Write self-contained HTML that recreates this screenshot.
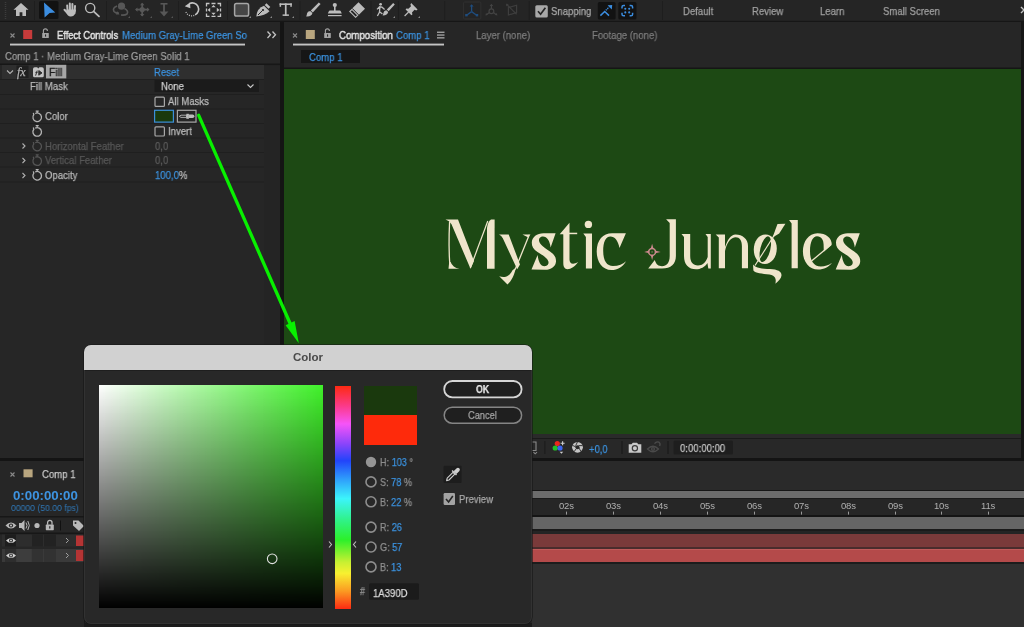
<!DOCTYPE html>
<html><head><meta charset="utf-8">
<style>
*{margin:0;padding:0;box-sizing:border-box}
html,body{width:1024px;height:627px;overflow:hidden;background:#141414;font-family:"Liberation Sans",sans-serif;color:#b8b8b8;position:relative}
.a{position:absolute;will-change:transform}
.t{position:absolute;white-space:nowrap;font-size:11px;line-height:12px;transform-origin:0 0;transform:scaleX(.87);-webkit-text-stroke-width:.25px;will-change:transform}
.b{color:#3b92df}
svg{overflow:visible}

</style></head><body>
<svg class="a" style="left:0;top:0" width="1024" height="22" viewBox="0 0 1024 22">
 <rect x="0" y="0" width="1024" height="21" fill="#252525"/>
 <rect x="0" y="20.8" width="1024" height="1.7" fill="#161616"/>
 <line x1="5.5" y1="2" x2="5.5" y2="19" stroke="#3c3c3c" stroke-width="1.5" stroke-dasharray="1 1"/>
 <!-- home -->
 <path d="M21 3 L13.5 9.8 L16 9.8 L16 16 L19.6 16 L19.6 12.2 L22.4 12.2 L22.4 16 L26 16 L26 9.8 L28.5 9.8 Z" fill="#bcbcbc"/>
 <line x1="34.5" y1="1" x2="34.5" y2="20" stroke="#1e1e1e"/>
 <!-- select -->
 <rect x="39" y="1" width="19.5" height="18" rx="1.5" fill="#121212"/>
 <path d="M44 2.6 L55.3 12.4 L49.6 13 L44.6 17.6 Z" fill="#3b8de0"/>
 <!-- hand -->
 <g fill="#bcbcbc" stroke="#bcbcbc" stroke-linecap="round">
  <line x1="67.2" y1="5.5" x2="67.6" y2="11" stroke-width="2"/>
  <line x1="69.8" y1="3.6" x2="70" y2="10.5" stroke-width="2"/>
  <line x1="72.4" y1="4" x2="72.4" y2="10.5" stroke-width="2"/>
  <line x1="75" y1="6" x2="74.6" y2="11" stroke-width="2"/>
  <line x1="64.5" y1="9.8" x2="67.5" y2="13" stroke-width="2"/>
  <path d="M66.5 9.5 L76 9.5 L75.5 13.5 Q73.5 16.8 70.5 16.5 Q67.5 16.2 66.5 13 Z" stroke="none"/>
 </g>
 <!-- magnifier -->
 <circle cx="90.2" cy="8" r="4.6" fill="none" stroke="#bcbcbc" stroke-width="1.4"/>
 <line x1="93.6" y1="11.4" x2="99" y2="16.4" stroke="#bcbcbc" stroke-width="1.8" stroke-linecap="round"/>
 <line x1="106.5" y1="1" x2="106.5" y2="20" stroke="#1e1e1e"/>
 <!-- orbit (dim) -->
 <g fill="#575757" stroke="#575757">
  <circle cx="121.5" cy="6.2" r="3.6" stroke="none"/>
  <path d="M117 6 Q112 8 114 11.5 Q116 13.5 119 13 M124.5 8.5 Q129 11 127 14 Q125 15.5 121 15" fill="none" stroke-width="1.6"/>
  <path d="M117 11 L119.5 14.5 L116 14.5 Z" stroke="none"/>
 </g>
 <path d="M128 18 L130 16 L130 18 Z" fill="#555"/>
 <!-- pan -->
 <g stroke="#575757" stroke-width="1.8" fill="#575757">
  <line x1="136" y1="9.6" x2="148.5" y2="9.6"/>
  <line x1="142.2" y1="3.5" x2="142.2" y2="16"/>
  <circle cx="142.2" cy="9.6" r="2.6" stroke="none"/>
  <path d="M135 9.6 L137.5 7.5 L137.5 11.7 Z M149.5 9.6 L147 7.5 L147 11.7 Z M142.2 2.8 L140 5.2 L144.4 5.2 Z M142.2 16.6 L140 14 L144.4 14 Z" stroke="none"/>
 </g>
 <path d="M150 18 L152 16 L152 18 Z" fill="#555"/>
 <!-- dolly -->
 <g fill="#575757">
  <rect x="160.5" y="3" width="7" height="1.6"/>
  <rect x="163.1" y="3" width="1.8" height="10"/>
  <path d="M159.6 11.5 L168.4 11.5 L164 16.6 Z"/>
 </g>
 <path d="M171 18 L173 16 L173 18 Z" fill="#555"/>
 <line x1="178.5" y1="1" x2="178.5" y2="20" stroke="#1e1e1e"/>
  <!-- rotate -->
 <path d="M189.5 3.6 A6.2 6.2 0 1 1 195.1 14.9" fill="none" stroke="#c4c4c4" stroke-width="1.6"/>
 <path d="M194.2 15.3 A6.2 6.2 0 0 1 185.6 10.8" fill="none" stroke="#c4c4c4" stroke-width="1.3" stroke-dasharray="1 1.2"/>
 <path d="M184.8 6.2 L190 2.4 L190.4 8.2 Z" fill="#c4c4c4"/>
<!-- anchor / pan behind -->
 <g stroke="#c4c4c4" stroke-width="1.3" fill="none">
  <path d="M206.5 6.5 V3.5 H209.5 M211.5 3.5 H215.5 M217.5 3.5 H220.5 V6.5 M220.5 8.5 V11.5 M220.5 13.5 V16.3 H217.5 M215.5 16.3 H211.5 M209.5 16.3 H206.5 V13.5 M206.5 11.5 V8.5"/>
 </g>
 <g fill="#c4c4c4">
  <path d="M213.5 4.9 L211.3 7.2 L215.7 7.2 Z M213.5 15 L211.3 12.7 L215.7 12.7 Z M207.6 9.9 L210.2 7.7 L210.2 12.1 Z M219.4 9.9 L216.8 7.7 L216.8 12.1 Z"/>
 </g>
 <line x1="227.5" y1="1" x2="227.5" y2="20" stroke="#1e1e1e"/>
 <!-- rect -->
 <rect x="234.6" y="3.6" width="14" height="12.4" rx="1.8" fill="#464646" stroke="#a6a6a6" stroke-width="1.5"/>
 <path d="M249 18 L251 16 L251 18 Z" fill="#888"/>
 <!-- pen -->
 <g fill="#bcbcbc">
  <path d="M266.5 3.2 L270.3 7 L268.5 8.8 L264.7 5 Z"/>
  <path d="M264 5.8 L269.5 11.3 Q265 15.5 256.3 16.4 Q257.2 8 264 5.8 Z"/>
 </g>
 <path d="M258 15 L262.5 10.5" stroke="#252525" stroke-width="1"/>
 <circle cx="263" cy="10" r="1.1" fill="#252525"/>
 <path d="M270 18 L272 16 L272 18 Z" fill="#888"/>
 <!-- T -->
 <g fill="#bcbcbc">
  <rect x="279.6" y="3.4" width="12.2" height="1.6"/>
  <rect x="279.6" y="3.4" width="1.5" height="3.4"/>
  <rect x="290.3" y="3.4" width="1.5" height="3.4"/>
  <rect x="284.9" y="3.4" width="1.7" height="12.4"/>
  <rect x="282.6" y="14.4" width="6.3" height="1.5"/>
 </g>
 <path d="M292 18 L294 16 L294 18 Z" fill="#888"/>
 <line x1="300" y1="1" x2="300" y2="20" stroke="#1e1e1e"/>
 <!-- brush -->
 <g fill="#bcbcbc">
  <path d="M318.8 2.4 L320.6 4 L312.8 12.4 L310.8 10.6 Z"/>
  <path d="M310.2 11 L312.4 13 Q311.8 16.8 306.2 16.4 Q307 14.8 307 13.6 Q307.4 11.4 310.2 11 Z"/>
 </g>
 <!-- stamp -->
 <g fill="#bcbcbc">
  <circle cx="334.8" cy="5" r="2.1"/>
  <rect x="334" y="6" width="1.6" height="5"/>
  <path d="M329 11 Q329 10.4 330 10.4 L339.6 10.4 Q340.6 10.4 340.6 11 L341.8 13.6 L327.8 13.6 Z"/>
  <rect x="328" y="15" width="13.6" height="1.2"/>
 </g>
 <!-- eraser -->
 <g>
  <path d="M358.5 2.2 L365 8.7 L355.6 18 L349 11.6 Z" fill="#bcbcbc"/>
  <path d="M352.2 8.4 L358.6 14.9" stroke="#252525" stroke-width="1"/>
  <path d="M350.6 11.6 L355.6 16.6 L357 15.2 L352 10.2 Z" fill="#252525"/>
 </g>
 <line x1="371" y1="1" x2="371" y2="20" stroke="#1e1e1e"/>
 <!-- roto brush -->
 <g fill="#bcbcbc" stroke="#bcbcbc">
  <circle cx="380.6" cy="4.3" r="1.4" stroke="none"/>
  <path d="M377 9.4 L379.6 6.8 L382 7.2 L384.6 9.4 M380 7 L379.4 12.2 L377.4 16 M379.6 11.8 L382.4 14" fill="none" stroke-width="1.3"/>
  <path d="M393.2 3 L394.8 4.6 L388.6 11.2 L386.8 9.6 Z" stroke="none"/>
  <path d="M386.2 10.2 L388.2 12 Q387.4 15.6 382.6 15.4 Q383.6 13.4 383.6 12.6 Q384 10.6 386.2 10.2 Z" stroke="none"/>
 </g>
 <path d="M393 18 L395 16 L395 18 Z" fill="#888"/>
 <line x1="398.4" y1="1" x2="398.4" y2="20" stroke="#1e1e1e"/>
 <!-- pin -->
 <g fill="#bcbcbc">
  <path d="M411.2 3 L417.6 9.4 L416.2 10.4 L414.6 9.8 L412 12.4 L412.4 14.4 L411.4 15.2 L405.6 9.4 L406.4 8.4 L408.4 8.8 L411 6.2 L410.4 4.6 Z"/>
  <path d="M408.2 11.6 L409 12.4 L405 16.4 L404.2 15.6 Z"/>
 </g>
 <path d="M418 18 L420 16 L420 18 Z" fill="#888"/>
 <line x1="444.7" y1="1" x2="444.7" y2="20" stroke="#1e1e1e"/>
  <!-- axis local -->
 <rect x="463.6" y="2" width="17.2" height="17" rx="1" fill="#242424" stroke="#303030" stroke-width="1"/>
 <g stroke="#1f4d7e" stroke-width="1.3" fill="none">
  <line x1="471.6" y1="5.5" x2="471.6" y2="11.6"/>
  <line x1="471.6" y1="11.6" x2="466.6" y2="15.2"/>
  <line x1="471.6" y1="11.6" x2="476.6" y2="15.2"/>
 </g>
 <g fill="#1f4d7e"><path d="M471.6 4.2 L469.6 6.4 L473.6 6.4 Z"/><rect x="465.2" y="14" width="2.4" height="2.4"/><rect x="475.8" y="14" width="2.4" height="2.4"/></g>
 <!-- world -->
 <g stroke="#434343" stroke-width="1.2" fill="none">
  <line x1="491.4" y1="5" x2="491.4" y2="9"/>
  <circle cx="491.4" cy="11.2" r="2.4"/>
  <line x1="489.4" y1="12.6" x2="486.4" y2="14.8"/>
  <line x1="493.4" y1="12.6" x2="496.4" y2="14.8"/>
 </g>
 <g fill="#434343"><path d="M491.4 3.8 L489.6 6 L493.2 6 Z M485.4 15.6 L486 13 L487.8 15 Z M497.4 15.6 L495 15 L496.8 13 Z"/></g>
 <!-- view -->
 <g stroke="#3e3e3e" stroke-width="1.2" fill="none">
  <path d="M508.4 7.6 L516.6 5.2 L516.6 12.6 L508.4 15 Z"/>
  <line x1="507" y1="4.8" x2="516.6" y2="14.2"/>
 </g>
 <path d="M506 3.8 L508.8 4 L506.2 6.6 Z" fill="#3e3e3e"/>
<line x1="529.2" y1="1" x2="529.2" y2="20" stroke="#1e1e1e"/>
 <!-- snapping checkbox -->
 <rect x="535.3" y="5.2" width="12.5" height="12.4" rx="1.5" fill="#a9a9a9"/>
 <path d="M538 11.3 L540.6 14.2 L545.4 7.8" fill="none" stroke="#262626" stroke-width="1.7"/>
 <rect x="597.8" y="2" width="17.8" height="17.4" rx="1.5" fill="#121212"/>
 <path d="M600.4 15.6 L604.7 11.5 L609 15.6" fill="none" stroke="#3b8de0" stroke-width="1.5"/>
 <path d="M605.8 10.2 L609 7.4" fill="none" stroke="#3b8de0" stroke-width="1.4" stroke-dasharray="1.2 .8"/>
 <path d="M607.6 5.2 L612.2 5 L611.8 9.4 Z" fill="#3b8de0"/>
 <rect x="618.3" y="2" width="18.2" height="17.4" rx="1.5" fill="#121212"/>
 <g stroke="#3b8de0" stroke-width="1.5" fill="none">
  <path d="M622 8.4 V7 Q622 5.4 623.6 5.4 H625 M629.6 5.4 H631 Q632.6 5.4 632.6 7 V8.4 M632.6 12.8 V14.2 Q632.6 15.8 631 15.8 H629.6 M625 15.8 H623.6 Q622 15.8 622 14.2 V12.8"/>
 </g>
 <g fill="#3b8de0"><circle cx="625.3" cy="8.7" r="1.05"/><circle cx="629.2" cy="8.7" r="1.05"/><circle cx="625.3" cy="12.4" r="1.05"/><circle cx="629.2" cy="12.4" r="1.05"/></g>
 <line x1="662.5" y1="1" x2="662.5" y2="20" stroke="#1e1e1e"/>
 <path d="M1021 7 L1024 10 L1021 13" fill="none" stroke="#c4c4c4" stroke-width="1.4"/>
</svg>

<!-- toolbar text -->
<div class="t" style="left:551px;top:5px;color:#a9a9a9">Snapping</div>
<div class="t" style="left:683px;top:5px;color:#a0a0a0">Default</div>
<div class="t" style="left:752px;top:5px;color:#a0a0a0">Review</div>
<div class="t" style="left:820px;top:5px;color:#a0a0a0">Learn</div>
<div class="t" style="left:883px;top:5px;color:#a0a0a0">Small Screen</div>

<!-- LEFT PANEL -->
<div class="a" style="left:0;top:22px;width:280px;height:436px;background:#262626"></div>
<div class="a" style="left:264px;top:65px;width:16px;height:393px;background:#242424"></div>
<svg class="a" style="left:0;top:22px" width="280" height="170">
 <path d="M10.5 11.5 L14.5 15.5 M14.5 11.5 L10.5 15.5" stroke="#8a8a8a" stroke-width="1.1"/>
 <rect x="23.2" y="8" width="9" height="9" fill="#c73b3b"/>
 <g fill="#a4a4a4"><rect x="42.2" y="11" width="6.6" height="5" rx=".5"/><path d="M43.4 11.1 V8.9 A2 2 0 0 1 47.4 8.9" fill="none" stroke="#a4a4a4" stroke-width="1.1"/></g>
 <rect x="45" y="12.4" width="1.1" height="2.2" fill="#262626"/>
 <rect x="10" y="21.6" width="235" height="1.9" fill="#c4c4c4"/>
 <path d="M267.5 9.5 L270.5 12.8 L267.5 16 M272.5 9.5 L275.5 12.8 L272.5 16" fill="none" stroke="#c4c4c4" stroke-width="1.3"/>
 <rect x="0" y="41.5" width="280" height="1.6" fill="#171717"/>
</svg>
<div class="t" style="left:57px;top:29px;color:#e4e4e4;transform:scaleX(.85);-webkit-text-stroke-width:.45px">Effect Controls</div>
<div class="t b" style="left:121.5px;top:29px">Medium Gray-Lime Green So</div>
<div class="t" style="left:5px;top:50px;color:#9c9c9c">Comp 1 · Medium Gray-Lime Green Solid 1</div>

<!-- effect rows -->
<div class="a" style="left:0;top:65px;width:264px;height:393px;background:#262626"></div>
<div class="a" style="left:2px;top:65px;width:262px;height:14px;background:#2f2f2f"></div>
<svg class="a" style="left:0;top:60px" width="280" height="140">
 <g fill="#1f1f1f">
  <rect x="0" y="19" width="264" height="1"/>
  <rect x="0" y="34" width="264" height="1"/>
  <rect x="0" y="48.5" width="264" height="1"/>
  <rect x="0" y="63" width="264" height="1"/>
  <rect x="0" y="77.5" width="264" height="1"/>
  <rect x="0" y="92" width="264" height="1"/>
  <rect x="0" y="106.5" width="264" height="1"/>
  <rect x="0" y="121.5" width="264" height="1"/>
 </g>
 <path d="M7 10.5 L10 13.5 L13 10.5" fill="none" stroke="#b0b0b0" stroke-width="1.1"/>
 <rect x="16.5" y="5.5" width="12" height="12.5" fill="#1f1f1f"/>
 <rect x="46" y="4.8" width="20.3" height="13.6" fill="#a6a6a6"/>
 <g fill="#c4c4c4"><path d="M33 9 Q33 7.2 34.8 7.2 L37.2 7.2 L38.2 8.4 L39.4 7.2 L42 7.2 Q43.8 7.2 43.8 9 L43.8 15.8 Q43.8 17.3 42.3 17.3 L34.5 17.3 Q33 17.3 33 15.8 Z"/></g>
 <path d="M35.6 15.6 L37.2 10.6 M35.4 12.4 H37.6 M38.8 10.6 L42 12.9 L38.8 15.2 Z" fill="#2f2f2f" stroke="#2f2f2f" stroke-width="1"/>
 <!-- dropdown -->
 <rect x="154.5" y="20" width="104.5" height="12" fill="#1b1b1b"/>
 <path d="M247.5 24.5 L250.5 27.5 L253.5 24.5" fill="none" stroke="#c8c8c8" stroke-width="1.1"/>
 <!-- checkbox all masks -->
 <rect x="155" y="37.2" width="9.4" height="9.2" rx="1" fill="none" stroke="#a8a8a8" stroke-width="1.2"/>
 <!-- color swatch -->
 <rect x="154.6" y="50.3" width="18.8" height="11.8" fill="#1a390d" stroke="#3b8fd9" stroke-width="1.2"/>
 <rect x="177.4" y="50.3" width="18.6" height="11.8" fill="none" stroke="#a8a8a8" stroke-width="1.2"/>
 <path d="M179.2 56.3 L181 55.2 H186.5 V57.4 H181 Z" fill="none" stroke="#b8b8b8" stroke-width=".9"/>
 <rect x="186.3" y="53.8" width="2.6" height="5" fill="#bcbcbc"/>
 <path d="M188.8 54.6 H192.6 Q194.4 54.6 194.4 56.3 Q194.4 58 192.6 58 H188.8 Z" fill="#bcbcbc"/>
 <!-- checkbox invert -->
 <rect x="155" y="66.8" width="9.4" height="9.2" rx="1" fill="none" stroke="#a8a8a8" stroke-width="1.2"/>
 <!-- stopwatches -->
 <path d="M35.18 53.50 A4.3 4.3 0 1 1 33.81 54.65 L33.30 52.90" fill="none" stroke="#b4b4b4" stroke-width="1.3"/><path d="M35.7 51.10 H38.7 M37.2 51.10 V53.00" fill="none" stroke="#b4b4b4" stroke-width="1.2"/>
 <path d="M35.18 68.10 A4.3 4.3 0 1 1 33.81 69.25 L33.30 67.50" fill="none" stroke="#b4b4b4" stroke-width="1.3"/><path d="M35.7 65.70 H38.7 M37.2 65.70 V67.60" fill="none" stroke="#b4b4b4" stroke-width="1.2"/>
 <path d="M35.18 82.70 A4.3 4.3 0 1 1 33.81 83.85 L33.30 82.10" fill="none" stroke="#555" stroke-width="1.3"/><path d="M35.7 80.30 H38.7 M37.2 80.30 V82.20" fill="none" stroke="#555" stroke-width="1.2"/>
 <path d="M35.18 97.30 A4.3 4.3 0 1 1 33.81 98.45 L33.30 96.70" fill="none" stroke="#555" stroke-width="1.3"/><path d="M35.7 94.90 H38.7 M37.2 94.90 V96.80" fill="none" stroke="#555" stroke-width="1.2"/>
 <path d="M35.18 112.00 A4.3 4.3 0 1 1 33.81 113.15 L33.30 111.40" fill="none" stroke="#b4b4b4" stroke-width="1.3"/><path d="M35.7 109.60 H38.7 M37.2 109.60 V111.50" fill="none" stroke="#b4b4b4" stroke-width="1.2"/>
 <g fill="none" stroke="#b0b0b0" stroke-width="1.1">
  <path d="M22.5 83.5 L25 86 L22.5 88.5"/>
  <path d="M22.5 98 L25 100.5 L22.5 103"/>
  <path d="M22.5 113 L25 115.5 L22.5 118"/>
 </g>
</svg>
<div class="t" style="left:17px;top:65.5px;color:#b4b4b4;font-family:'Liberation Serif';font-style:italic;font-size:12px;transform:none">fx</div>
<div class="t" style="left:49px;top:65.5px;color:#1e1e1e;transform:scaleX(.95);-webkit-text-stroke-width:.35px">Fill</div>
<div class="t b" style="left:153.5px;top:65.5px">Reset</div>
<div class="t" style="left:30px;top:80px;color:#b8b8b8">Fill Mask</div>
<div class="t" style="left:160.5px;top:80px;color:#cfcfcf">None</div>
<div class="t" style="left:168px;top:95px;color:#bcbcbc">All Masks</div>
<div class="t" style="left:45px;top:110px;color:#b8b8b8">Color</div>
<div class="t" style="left:168px;top:124.5px;color:#bcbcbc">Invert</div>
<div class="t" style="left:45px;top:139.5px;color:#575757">Horizontal Feather</div>
<div class="t" style="left:155px;top:139.5px;color:#5c5c5c">0,0</div>
<div class="t" style="left:45px;top:154px;color:#575757">Vertical Feather</div>
<div class="t" style="left:155px;top:154px;color:#5c5c5c">0,0</div>
<div class="t" style="left:45px;top:168.5px;color:#b8b8b8">Opacity</div>
<div class="t" style="left:155px;top:168.5px;color:#b8b8b8"><span class="b">100,0</span>%</div>

<!-- COMP PANEL -->
<div class="a" style="left:284px;top:22px;width:737px;height:436px;background:#262626"></div>
<div class="a" style="left:1021px;top:22px;width:3px;height:436px;background:#161616"></div>
<svg class="a" style="left:284px;top:22px" width="740" height="50">
 <path d="M9 11.5 L13 15.5 M13 11.5 L9 15.5" stroke="#8a8a8a" stroke-width="1.1"/>
 <rect x="21.8" y="8" width="9" height="9" fill="#b9a67f"/>
 <g fill="#a4a4a4"><rect x="40.2" y="11" width="6.6" height="5" rx=".5"/><path d="M41.4 11.1 V8.9 A2 2 0 0 1 45.4 8.9" fill="none" stroke="#a4a4a4" stroke-width="1.1"/></g>
 <rect x="43" y="12.4" width="1.1" height="2.2" fill="#262626"/>
 <g fill="#a8a8a8"><rect x="153" y="9.6" width="7.5" height="1.3"/><rect x="153" y="12.4" width="7.5" height="1.3"/><rect x="153" y="15.2" width="7.5" height="1.3"/></g>
 <rect x="9" y="21.6" width="151" height="1.9" fill="#c4c4c4"/>
 <rect x="17" y="28" width="59" height="13" fill="#161616"/>
 <rect x="0" y="45.5" width="740" height="1.5" fill="#151515"/>
</svg>
<div class="t" style="left:339px;top:29px;color:#e4e4e4;transform:scaleX(.88);-webkit-text-stroke-width:.45px">Composition</div>
<div class="t b" style="left:396px;top:29px">Comp 1</div>
<div class="t" style="left:476px;top:29px;color:#7c7c7c">Layer (none)</div>
<div class="t" style="left:592px;top:29px;color:#7c7c7c">Footage (none)</div>
<div class="t b" style="left:309px;top:50.5px">Comp 1</div>

<!-- viewer -->
<div class="a" style="left:284px;top:69px;width:737px;height:365.3px;background:#1d4914"></div>
<div class="a" style="left:284px;top:434.3px;width:737px;height:3.5px;background:#2a2a2a"></div>
<div class="a" style="left:284px;top:437.8px;width:737px;height:1.2px;background:#1a1a1a"></div>
<div class="a" style="left:284px;top:439px;width:737px;height:19px;background:#282828"></div>

<!-- title text -->
<svg class="a" style="left:0;top:0" width="1024" height="627" viewBox="0 0 1024 627">
<g fill="#efe5cb">
 <!-- M -->
 <path d="M445.5 219.5 L458 219.5 L474 261 L470.5 268.8 L451.5 224.2 Q449.5 220.8 445.5 219.5 Z"/>
 <path d="M449.6 221.5 C448.8 238, 448.8 252, 449.9 266" fill="none" stroke="#efe5cb" stroke-width="1.3"/>
 <path d="M448.5 268.8 L459.5 268.8 Q452.5 267.5 450.6 262 L449.2 262 Z"/>
 <path d="M470.3 268 L487.8 221" fill="none" stroke="#efe5cb" stroke-width="1.2"/>
 <path d="M487 268.8 L487 228 Q487.8 221.5 491 219.5 L494.6 219.5 L494.6 268.8 Z"/>
 <!-- y -->
 <path d="M499 234.4 L508.7 234.4 L520 264.5 L517.2 269.2 L502.8 238.2 Q501.5 235.4 499 234.4 Z"/>
 <path d="M522.5 234.4 L530.6 234.4 Q528.8 235.2 528.3 237.5 Z"/>
 <path d="M529.3 234.8 L515.2 269.5" fill="none" stroke="#efe5cb" stroke-width="1.3"/>
 <path d="M515.9 267.5 C514.5 275, 511.5 281, 507.5 284.5 L499.2 276.2 C504 278, 509 277.2, 512.3 270.5 Z"/>
 <!-- s -->
 <path id="gs" d="M555.6 233.2 L550.6 247.5 C549.8 241, 547 236.6, 543 236.6 C539.8 236.6, 538.5 239, 539.2 241.5 C540.2 245, 545 248, 550 251.5 C554.5 254.5, 556.2 257.5, 556 261.5 C555.8 266.5, 551 269.8, 545 269.8 L531.5 269.6 L537.6 255 C538.5 262, 540.5 266.2, 544.5 266.2 C547.5 266.2, 549 264, 548.4 261.5 C547.5 258, 543 255.5, 537.5 252 C533.5 249.5, 531.6 246.5, 531.8 242.5 C532 237, 537 233.2, 543.5 233.2 Z"/>
 <!-- t -->
 <path d="M569.5 222.8 L569.5 259.5 C569.5 263.5, 572.5 265.2, 578.2 262 C575 266.5, 571 269.2, 567.5 269.2 C564.8 269.2, 563.3 267, 563.3 263 L563.3 234.3 L559.7 234.3 Z"/>
 <rect x="563" y="232.7" width="14.2" height="1.5"/>
 <!-- i -->
 <circle cx="588.4" cy="224.4" r="3.7"/>
 <path d="M583.3 233.5 L592 233.5 L592 268.4 L585.9 268.4 L585.9 237 Z"/>
 <!-- c -->
 <path d="M625.9 233.2 L619.5 248 C618 240, 614.5 236.4, 610.5 236.4 C605.5 236.4, 603.2 242, 603.2 251 C603.2 261, 607 266, 613 266 C618.5 266, 623 264, 626 261.2 C623 267, 617.5 270, 611.5 270 C602.5 270, 596.7 262, 596.7 251.5 C596.7 240, 603 233.2, 612 233.2 Z"/>
 <!-- J -->
 <path d="M666.1 219.2 L675.9 219.2 L675.9 256 C675.9 264, 671 268.5, 662 268.5 L648.2 268.5 L654.8 260 C656 264.5, 658.5 266.2, 662 266.2 C666.5 266.2, 669.7 263, 669.7 256 L669.7 223 Z"/>
 <!-- u -->
 <path d="M681.5 234 L690.2 234 L690.2 256 C690.2 262, 693 265.5, 698 265.5 C702.5 265.5, 706 262, 707.7 257 L707.7 237 L705.5 234 L710.8 234 L710.8 268.5 L708.3 268.5 L707.4 263 C705 267, 700.5 269.3, 696 269.3 C688.5 269.3, 684 264.5, 684 256 L684 237 Z"/>
 <!-- n -->
 <path d="M715.7 234.4 L725 234.4 L725 247 C727.5 239.5, 731 234.4, 735.5 234.4 C742.5 234.4, 748 239, 748 246 L748 268.2 L741.9 268.2 L741.9 246 C741.9 240.5, 739.5 237.2, 735.8 237.2 C731 237.2, 727 242, 725 251 L725 268.2 L718.8 268.2 L718.8 237.5 Z"/>
 <!-- g -->
 <path d="M765.5 234.4 C772.5 234.4, 776.8 241, 776.8 248.5 C776.8 257, 771.5 264, 764.8 264 C758 264, 753.8 257.5, 753.8 249.5 C753.8 241.2, 758.5 234.4, 765.5 234.4 Z"/>
 <ellipse cx="765.3" cy="249.2" rx="5" ry="13.2" transform="rotate(14 765.3 249.2)" fill="#1d4914"/>
 <path d="M755 265.5 L780.5 225.5" fill="none" stroke="#efe5cb" stroke-width="1.2"/>
 <path d="M777.5 224 L785.4 223.8 L779.2 233.5 L772.5 237.5 Z"/>
 <path d="M753 264.5 C756 268.2, 762 268.8, 770 269 C777.5 269.3, 781.8 271.5, 781.5 275.5 C781.2 278.5, 778.5 281, 775.4 283.8 C776.5 279.5, 775.5 275.5, 769.5 274.6 C762 273.6, 755.5 273.2, 753.4 270.5 Z"/>
 <!-- l -->
 <path d="M789.1 220.1 L797.8 220.1 L797.8 268.2 L791.6 268.2 L791.6 223.5 Z"/>
 <!-- e -->
 <path d="M831.8 244.5 C831.8 238, 826 233.2, 817.5 233.2 C808.5 233.2, 802.9 241.5, 802.9 251.5 C802.9 262, 809.5 269.6, 818 269.6 C824 269.6, 829 267, 832 262.8 C828.5 265.5, 825 266.5, 821 266.5 C813.5 266.5, 810 260.5, 810 251 C810 241.5, 813 236.2, 817 236.2 C821.5 236.2, 823.5 240, 823.6 244.5 L823.8 251.8 Z"/>
 <path d="M831 244.8 L811.5 261" fill="none" stroke="#efe5cb" stroke-width="1.3"/>
 <!-- s2 -->
 <use href="#gs" transform="translate(304.2 0)"/>
</g>
</svg>

<svg class="a" style="left:640px;top:240px" width="24" height="24">
 <g fill="#cc8a8e">
  <path d="M12.1 3.8 L13.5 8.8 L10.7 8.8 Z M12.1 20 L13.5 15 L10.7 15 Z M4.2 11.9 L9.2 10.5 L9.2 13.3 Z M20.7 11.9 L15 10.5 L15 13.3 Z"/>
 </g>
 <circle cx="12.1" cy="11.9" r="3.4" fill="none" stroke="#cc8a8e" stroke-width="1.6"/>
 <circle cx="12.1" cy="11.9" r=".9" fill="#6a6a50"/>
</svg>

<!-- comp footer icons -->
<svg class="a" style="left:520px;top:435px" width="504" height="24">
 <path d="M11.5 7 H16 V15.5 H11.5 M13.5 17.2 L15.2 18.8 L17 17.2" fill="none" stroke="#8a8a8a" stroke-width="1.1"/>
 <rect x="24.3" y="6" width="1.2" height="13" fill="#1c1c1c"/>
 <circle cx="37.3" cy="8.6" r="2.6" fill="#e8281e"/>
 <circle cx="35.2" cy="13" r="2.6" fill="#22c028"/>
 <circle cx="40" cy="13" r="2.6" fill="#3a64f0"/>
 <path d="M40.6 8.2 H44.6 M42.6 6.2 V10.2" stroke="#cfcfcf" stroke-width="1.1"/>
 <path d="M39.6 16.8 L43.2 16.8 L41.4 18.8 Z" fill="#cfcfcf"/>
 <circle cx="57.5" cy="12.3" r="5.4" fill="#c4c4c4"/>
 <circle cx="57.5" cy="12.3" r="2" fill="#282828"/>
 <g stroke="#282828" stroke-width=".9"><path d="M57.5 6.9 L55.6 10.8 M62.6 10.6 L58.6 10.6 M61 16.5 L58.9 12.9 M54.2 16.6 L56.3 13.6 M52.2 10.2 L56 12"/></g>
 <rect x="101.4" y="6" width="1.2" height="13" fill="#1c1c1c"/>
 <path d="M108.7 9.3 H111.5 L112.8 7.8 H117 L118.3 9.3 H121.3 V17.7 H108.7 Z" fill="#c8c8c8"/>
 <circle cx="114.9" cy="13.2" r="2.6" fill="none" stroke="#3a3a3a" stroke-width="1.2"/>
 <g fill="none" stroke="#4a4a4a" stroke-width="1.3"><path d="M127.5 14 Q133 8.5 138.5 14 Q133 19.5 127.5 14 Z"/><circle cx="133" cy="14" r="1.4"/><path d="M134.5 8.6 Q136.5 6 139 7.2 Q140.8 8.6 139.6 11"/></g>
 <rect x="147.4" y="6" width="1.2" height="13" fill="#1c1c1c"/>
 <rect x="153.5" y="5.6" width="59.5" height="14" rx="1.5" fill="#1e1e1e"/>
</svg>
<div class="t b" style="left:589px;top:442.5px;transform:scaleX(.86)">+0,0</div>
<div class="t" style="left:680px;top:442px;color:#c4c4c4;transform:scaleX(.87)">0:00:00:00</div>

<!-- TIMELINE -->
<div class="a" style="left:0;top:461px;width:1024px;height:166px;background:#262626"></div>
<div class="a" style="left:0;top:458px;width:1024px;height:3px;background:#141414"></div>
<svg class="a" style="left:0;top:461px" width="1024" height="166">
 <path d="M10.5 11.5 L14.5 15.5 M14.5 11.5 L10.5 15.5" stroke="#8a8a8a" stroke-width="1.1"/>
 <rect x="23.5" y="8.3" width="9.1" height="8" fill="#b9a67f"/>
 <rect x="0" y="55" width="84" height="1.5" fill="#171717"/>
 <!-- header icons -->
 <g transform="translate(0,1)">
 <path d="M5.5 63.5 Q11 57.3 16.5 63.5 Q11 69.7 5.5 63.5 Z" fill="#b8b8b8"/>
 <circle cx="11" cy="63.5" r="2.1" fill="#262626"/>
 <circle cx="11" cy="63.5" r="1.1" fill="#b8b8b8"/>
 <path d="M19 61 H21.5 L24.5 58 V69 L21.5 66 H19 Z" fill="#b8b8b8"/>
 <path d="M26 60.5 Q28 63.5 26 66.5 M27.8 59 Q30.8 63.5 27.8 68" fill="none" stroke="#b8b8b8" stroke-width="1"/>
 <circle cx="37" cy="63.5" r="2.6" fill="#b8b8b8"/>
 <rect x="45.8" y="62.6" width="8" height="5.6" rx=".6" fill="#b8b8b8"/>
 <path d="M47.6 62.7 V60.6 A2.2 2.2 0 0 1 52 60.6 V62.7" fill="none" stroke="#b8b8b8" stroke-width="1.3"/>
 <rect x="49.2" y="64.2" width="1.2" height="2.4" fill="#262626"/>
 <rect x="60" y="58.5" width="1" height="10" fill="#111"/>
 <path d="M73 58.5 H78.5 L84 64 L79 69 L73 63.5 Z" fill="#b8b8b8"/>
 <circle cx="75.5" cy="61" r="1" fill="#262626"/>
 </g>
 <rect x="0" y="71.5" width="84" height="1.8" fill="#171717"/>
 <!-- layer rows -->
 <rect x="2" y="73.5" width="82" height="12" fill="#2d2d2d"/>
 <rect x="5" y="73.5" width="11" height="12" fill="#1d1d1d"/>
 <rect x="17" y="73.5" width="14" height="12" fill="#2d2d2d"/>
 <rect x="32" y="73.5" width="11" height="12" fill="#222"/>
 <rect x="44" y="73.5" width="12" height="12" fill="#222"/>
 <rect x="2" y="88" width="82" height="13" fill="#3a3a3a"/>
 <rect x="5" y="88" width="11" height="13" fill="#2e2e2e"/>
 <rect x="17" y="88" width="14" height="13" fill="#3d3d3d"/>
 <rect x="32" y="88" width="11" height="13" fill="#323232"/>
 <rect x="44" y="88" width="12" height="13" fill="#323232"/>
 <g fill="#d0d0d0">
  <path d="M6 79.5 Q11 74.3 16 79.5 Q11 84.7 6 79.5 Z"/>
  <path d="M6 94.5 Q11 89.3 16 94.5 Q11 99.7 6 94.5 Z"/>
 </g>
 <circle cx="11" cy="79.5" r="1.9" fill="#1d1d1d"/><circle cx="11" cy="79.5" r="1" fill="#d0d0d0"/>
 <circle cx="11" cy="94.5" r="1.9" fill="#2e2e2e"/><circle cx="11" cy="94.5" r="1" fill="#d0d0d0"/>
 <path d="M66 77 L68.5 79.5 L66 82 M66 92 L68.5 94.5 L66 97" fill="none" stroke="#a0a0a0" stroke-width="1"/>
 <rect x="76" y="74.5" width="8" height="10.5" fill="#b43434"/>
 <rect x="76" y="89" width="8" height="11" fill="#b43434"/>
 <rect x="84" y="0" width="1" height="166" fill="#1a1a1a"/>
</svg>
<div class="t" style="left:42px;top:467.5px;color:#c8c8c8">Comp 1</div>
<div class="a" style="left:12.5px;top:488px;font-size:12.4px;line-height:16px;color:#3d93e0;white-space:nowrap;font-weight:bold;transform-origin:0 0;transform:scaleX(1.07)">0:00:00:00</div>
<div class="a" style="left:11px;top:503px;font-size:9px;line-height:11px;color:#2f78b8;white-space:nowrap;transform-origin:0 0;transform:scaleX(.96)">00000 (50.00 fps)</div>

<!-- timeline graph right -->
<div class="a" style="left:532px;top:461px;width:492px;height:29px;background:#2a2a2a"></div>
<div class="a" style="left:532px;top:489.5px;width:492px;height:1.5px;background:#161616"></div>
<div class="a" style="left:532px;top:491px;width:492px;height:7px;background:#6c6c6c"></div>
<div class="a" style="left:532px;top:498px;width:492px;height:1px;background:#1a1a1a"></div>
<div class="a" style="left:532px;top:499px;width:492px;height:16px;background:#262626"></div>
<div class="a" style="left:532px;top:515px;width:492px;height:1.5px;background:#141414"></div>
<div class="a" style="left:532px;top:516.5px;width:492px;height:12px;background:#656565"></div>
<div class="a" style="left:532px;top:528.5px;width:492px;height:2.5px;background:#1a1a1a"></div>
<div class="a" style="left:532px;top:531px;width:492px;height:3px;background:#242424"></div>
<div class="a" style="left:532px;top:534px;width:492px;height:13px;background:#7a3a3a"></div>
<div class="a" style="left:532px;top:547px;width:492px;height:1.6px;background:#4a2c2c"></div>
<div class="a" style="left:532px;top:548.6px;width:492px;height:13.5px;background:#b44a4a;border-top:1px solid #c05a5a"></div>
<div class="a" style="left:532px;top:562px;width:492px;height:1.5px;background:#1c1c1c"></div>
<div class="a" style="left:532px;top:563.5px;width:492px;height:63.5px;background:#303030"></div>
<svg class="a" style="left:532px;top:498px" width="492" height="18">
 <g fill="#9a9a9a">
  <rect x="34" y="13.6" width="1" height="3"/><rect x="81" y="13.6" width="1" height="3"/><rect x="128" y="13.6" width="1" height="3"/>
  <rect x="175" y="13.6" width="1" height="3"/><rect x="222" y="13.6" width="1" height="3"/><rect x="269" y="13.6" width="1" height="3"/>
  <rect x="316" y="13.6" width="1" height="3"/><rect x="363" y="13.6" width="1" height="3"/><rect x="409" y="13.6" width="1" height="3"/>
  <rect x="456" y="13.6" width="1" height="3"/>
 </g>
</svg>
<div class="a" style="left:532px;top:500px;width:492px;height:12px;font-size:9.5px;line-height:12px;color:#b0b0b0;letter-spacing:-.2px">
 <span class="a" style="left:27px">02s</span><span class="a" style="left:74px">03s</span><span class="a" style="left:121px">04s</span>
 <span class="a" style="left:168px">05s</span><span class="a" style="left:215px">06s</span><span class="a" style="left:262px">07s</span>
 <span class="a" style="left:309px">08s</span><span class="a" style="left:356px">09s</span><span class="a" style="left:402px">10s</span>
 <span class="a" style="left:449px">11s</span>
</div>
<div class="a" style="left:84px;top:623px;width:448px;height:4px;background:#1b1b1b"></div>

<!-- DIALOG -->
<div class="a" style="left:84px;top:345px;width:448px;height:278.5px;background:#282828;border-radius:7px;overflow:hidden;box-shadow:0 0 0 .6px #161616">
  <div class="a" style="left:0;top:0;width:448px;height:24.5px;background:#d1d1d1"></div>
  <div class="a" style="left:0;top:24.5px;width:448px;height:1px;background:#1e1e1e"></div>
  <div class="a" style="left:0;top:0;width:448px;line-height:25px;text-align:center;font-size:11.5px;font-weight:bold;color:#4a4a4a">Color</div>
  <div class="a" style="left:15.3px;top:40.3px;width:223.8px;height:223.4px;background:linear-gradient(to top,#000,rgba(0,0,0,0)),linear-gradient(to right,#fff,rgba(255,255,255,0)),#40f22a"></div>
  <div class="a" style="left:251px;top:40.5px;width:16px;height:223px;background:linear-gradient(to bottom,#fd2a12 0%,#fb3a8a 9%,#f654f8 17%,#8a44fa 26%,#2244fa 33.5%,#2fa0fb 42%,#3cf4fb 50.5%,#30f28a 60%,#2cf02a 69%,#c8f032 79%,#f8f030 84%,#fb9a22 92%,#fd2a12 100%)"></div>
  <div class="a" style="left:280px;top:40.5px;width:53px;height:29.5px;background:#1a390d"></div>
  <div class="a" style="left:280px;top:70px;width:53px;height:30px;background:#fe2a0b"></div>
  <div class="a" style="left:0;top:25px;width:448px;height:253.5px;border:1px solid #323232;border-top:none;border-radius:0 0 7px 7px"></div>
</div>
<svg class="a" style="left:84px;top:345px" width="448" height="278">
 <circle cx="188.2" cy="213.8" r="4.8" fill="none" stroke="#e0e0e0" stroke-width="1.1"/>
 <path d="M245 196.5 L247.5 199.5 L245 202.5 M272 196.5 L269.5 199.5 L272 202.5" fill="none" stroke="#bdbdbd" stroke-width="1.1"/>
 <circle cx="287" cy="117" r="5.2" fill="#959595"/>
 <g fill="none" stroke="#8e8e8e" stroke-width="1.6">
  <circle cx="287" cy="136.9" r="5"/><circle cx="287" cy="156.8" r="5"/>
  <circle cx="287" cy="182.1" r="5"/><circle cx="287" cy="202" r="5"/><circle cx="287" cy="221.9" r="5"/>
 </g>
 <rect x="285" y="238.2" width="50" height="16.6" rx="1.5" fill="#1b1b1b"/>
 <rect x="360.2" y="36" width="77.4" height="16.4" rx="8.2" fill="#1f1f1f" stroke="#d6d6d6" stroke-width="1.8"/>
 <rect x="360.2" y="62.2" width="77.4" height="16" rx="8" fill="#1f1f1f" stroke="#858585" stroke-width="1.5"/>
 <rect x="359.6" y="120.7" width="18" height="17.2" rx="1" fill="#1d1d1d"/>
 <path d="M362.6 135.6 L363.2 133.2 L369 127.4 L370.8 129.2 L365 135 Z" fill="none" stroke="#cfcfcf" stroke-width="1.1" stroke-linejoin="round"/>
 <path d="M367.6 126 L372 130.4 L373 129.4 L368.6 125 Z" fill="#cfcfcf"/>
 <path d="M369.6 126.2 L372.4 123.4 Q374 122 375.3 123.3 Q376.6 124.6 375.2 126.2 L372.4 129 Z" fill="#cfcfcf"/>
 <rect x="359.6" y="148" width="11.4" height="12" rx="1.3" fill="#a3a3a3"/>
 <path d="M362 154 L364.6 157 L368.8 151" fill="none" stroke="#262626" stroke-width="1.6"/>
</svg>
<div class="t" style="left:379.5px;top:456px;color:#8e8e8e;font-size:10.5px">H: <span class="b">103</span> °</div>
<div class="t" style="left:379.5px;top:476px;color:#8e8e8e;font-size:10.5px">S: <span class="b">78</span> %</div>
<div class="t" style="left:379.5px;top:496px;color:#8e8e8e;font-size:10.5px">B: <span class="b">22</span> %</div>
<div class="t" style="left:379.5px;top:521px;color:#8e8e8e;font-size:10.5px">R: <span class="b">26</span></div>
<div class="t" style="left:379.5px;top:541px;color:#8e8e8e;font-size:10.5px">G: <span class="b">57</span></div>
<div class="t" style="left:379.5px;top:561px;color:#8e8e8e;font-size:10.5px">B: <span class="b">13</span></div>
<div class="t" style="left:360px;top:586px;color:#9c9c9c;font-size:10px">#</div>
<div class="t" style="left:373px;top:586.5px;color:#dadada">1A390D</div>
<div class="t" style="left:475.5px;top:383px;color:#e8e8e8;font-weight:bold;transform:scaleX(.8)">OK</div>
<div class="t" style="left:468px;top:409px;color:#a4a4a4;transform:scaleX(.84)">Cancel</div>
<div class="t" style="left:458.5px;top:493px;color:#a8a8a8">Preview</div>

<!-- green arrow -->
<svg class="a" style="left:0;top:0" width="1024" height="627">
 <line x1="198.7" y1="115.3" x2="293" y2="330" stroke="#08f000" stroke-width="3.3" stroke-linecap="round"/>
 <path d="M298.8 343.2 L285.6 325.2 L294.6 321 Z" fill="#08f000"/>
</svg>

</body></html>
